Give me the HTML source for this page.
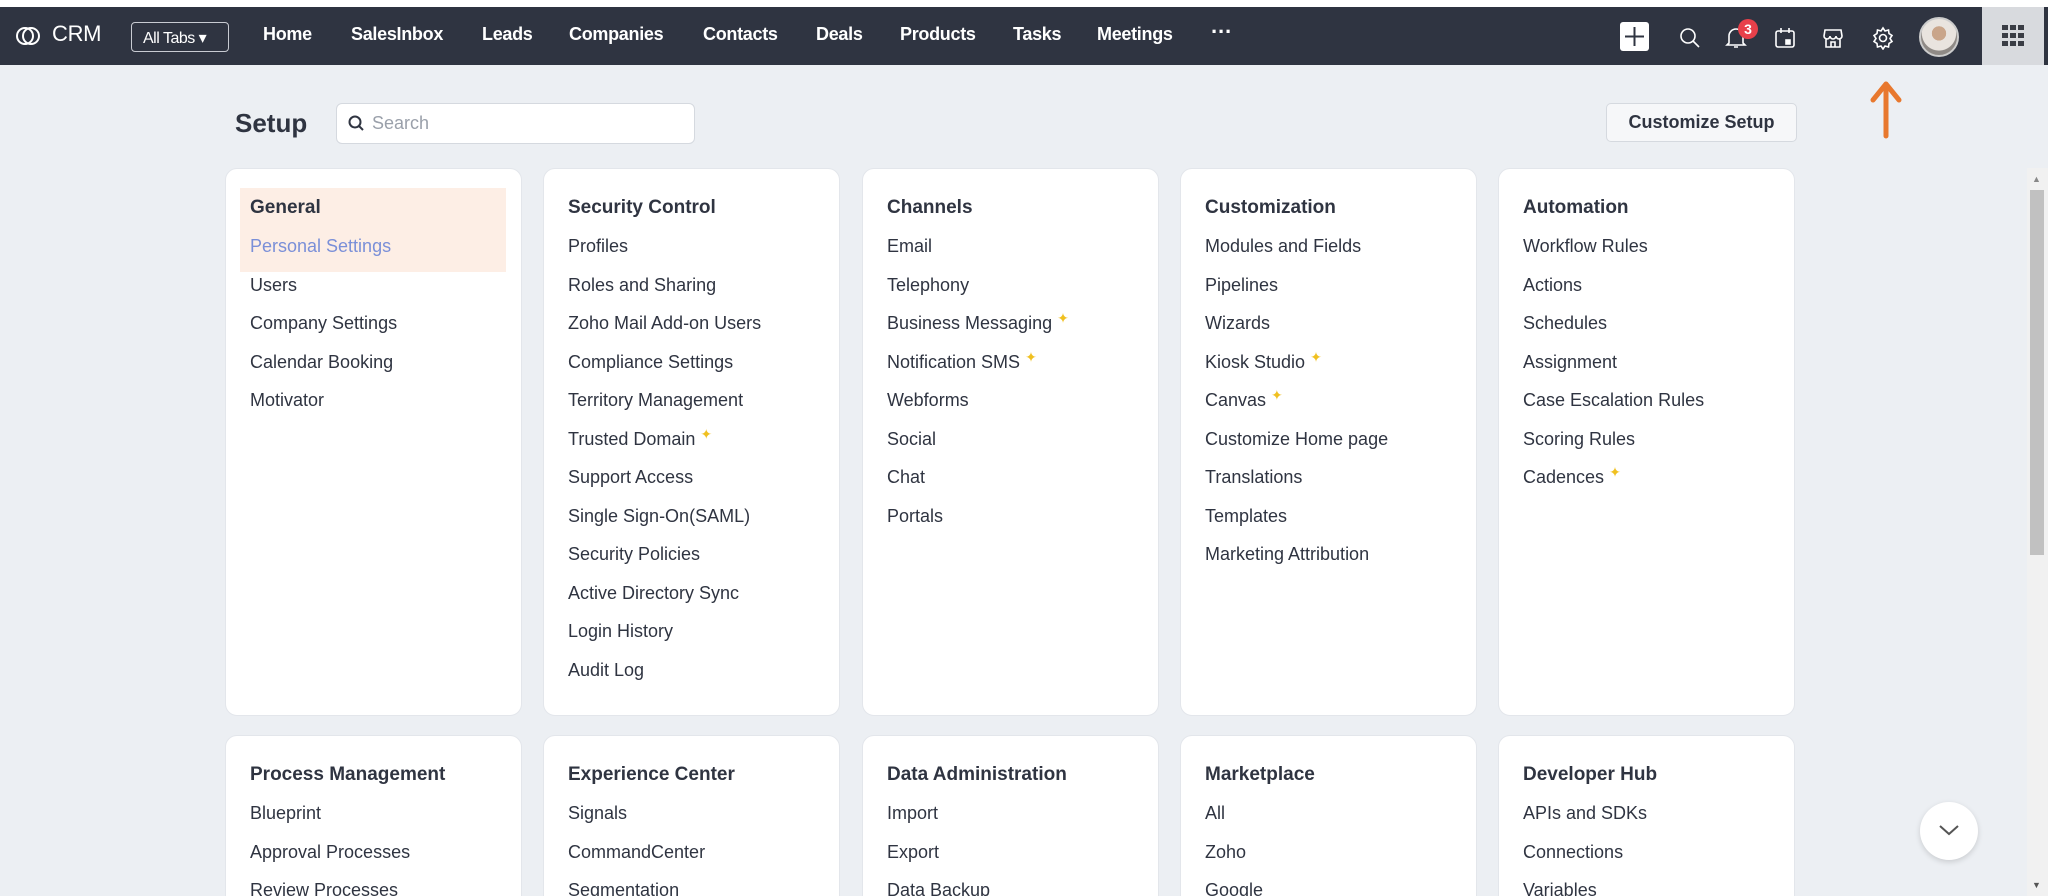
<!DOCTYPE html>
<html style="width:2048px;height:896px;overflow:hidden"><head><meta charset="utf-8"><style>
*{margin:0;padding:0;box-sizing:border-box}
body{width:2048px;height:896px;overflow:hidden;background:#eceff3;font-family:"Liberation Sans",sans-serif;position:relative;color:#2f3441}
.top{position:absolute;left:0;top:0;width:2048px;height:7px;background:#fff}
.nav{position:absolute;left:0;top:7px;width:2048px;height:58px;background:#2f3441}
.nav .t{position:absolute;top:17px;color:#fff;font-size:18px;font-weight:bold;letter-spacing:-0.3px}
.alltabs{position:absolute;left:131px;top:15px;width:98px;height:30px;border:1.5px solid #c8cbd2;border-radius:4px;color:#fff;font-size:16px;padding:5px 0 0 11px;letter-spacing:-0.5px}
.card{position:absolute;width:297px;background:#fff;border-radius:12px;border:1px solid #e3e6eb}
.card div{position:absolute;left:24px;font-size:18px;color:#2f3441;white-space:nowrap}
.card .h{font-weight:bold;font-size:19px}
.sp{color:#f0c020;font-size:14px;position:relative;top:-6px}
.ic{position:absolute;top:0}
</style></head><body>
<div class="top"></div>
<div class="nav">
<svg class="ic" style="left:14px;top:15px" width="28" height="28" viewBox="0 0 28 28" fill="none" stroke="#fff" stroke-width="2"><circle cx="11" cy="14" r="8"/><circle cx="17" cy="14" r="8"/></svg>
<div class="t" style="left:52px;top:14px;font-size:22px;font-weight:normal">CRM</div>
<div class="alltabs">All Tabs ▾</div>
<div class="t" style="left:263px">Home</div>
<div class="t" style="left:351px">SalesInbox</div>
<div class="t" style="left:482px">Leads</div>
<div class="t" style="left:569px">Companies</div>
<div class="t" style="left:703px">Contacts</div>
<div class="t" style="left:816px">Deals</div>
<div class="t" style="left:900px">Products</div>
<div class="t" style="left:1013px">Tasks</div>
<div class="t" style="left:1097px">Meetings</div>
<div class="t" style="left:1211px;top:20px;font-size:22px;line-height:10px">···</div>
<div style="position:absolute;left:1620px;top:15px;width:29px;height:29px;background:#fff;border-radius:3px"></div>
<svg class="ic" style="left:1620px;top:15px" width="29" height="29"><path d="M14.5 5v19M5 14.5h19" stroke="#2f3441" stroke-width="2"/></svg>
<svg class="ic" style="left:1678px;top:19px" width="24" height="24" fill="none" stroke="#fff" stroke-width="1.6"><circle cx="10" cy="10" r="7"/><path d="M15 15l6 6"/></svg>
<svg class="ic" style="left:1724px;top:18px" width="24" height="26" fill="none" stroke="#fff" stroke-width="1.6"><path d="M5 18V11a7 7 0 0 1 14 0v7l2 2H3z M10 22h4"/></svg>
<div style="position:absolute;left:1738px;top:12px;width:20px;height:20px;border-radius:50%;background:#e8404a;color:#fff;font-size:14px;font-weight:bold;text-align:center;line-height:20px">3</div>
<svg class="ic" style="left:1773px;top:19px" width="24" height="24" fill="none" stroke="#fff" stroke-width="1.6"><rect x="3" y="5" width="18" height="16" rx="2"/><path d="M8 2v5M16 2v5"/><rect x="13" y="14" width="4" height="4" fill="#fff"/></svg>
<svg class="ic" style="left:1821px;top:19px" width="24" height="24" fill="none" stroke="#fff" stroke-width="1.6"><path d="M4 4h16l1 6a3 3 0 0 1-6 0 3 3 0 0 1-6 0 3 3 0 0 1-6 0z M5 12v9h14v-9 M10 21v-5h4v5"/></svg>
<svg class="ic" style="left:1871px;top:19px" width="24" height="24" fill="none" stroke="#fff" stroke-width="1.6"><circle cx="12" cy="12" r="3.5"/><path d="M12 2l2 3 3.5-1 .5 3.5 3 2-2 3 2 3-3 2-.5 3.5-3.5-1-2 3-2-3-3.5 1-.5-3.5-3-2 2-3-2-3 3-2 .5-3.5 3.5 1z"/></svg>
<div style="position:absolute;left:1919px;top:10px;width:40px;height:40px;border-radius:50%;background:radial-gradient(circle at 50% 40%,#c9a58a 0 25%,#e9e4df 26% 60%,#8f8a86 62%);border:2px solid #ccc"></div>
<div style="position:absolute;left:1982px;top:0;width:62px;height:58px;background:#d8dade"></div>
<svg class="ic" style="left:2002px;top:18px" width="22" height="22" fill="#3a3d45"><rect x="0" y="0" width="6" height="5"/><rect x="8" y="0" width="6" height="5"/><rect x="16" y="0" width="6" height="5"/><rect x="0" y="8" width="6" height="5"/><rect x="8" y="8" width="6" height="5"/><rect x="16" y="8" width="6" height="5"/><rect x="0" y="16" width="6" height="5"/><rect x="8" y="16" width="6" height="5"/><rect x="16" y="16" width="6" height="5"/></svg>
</div>

<div style="position:absolute;left:235px;top:108px;font-size:26px;font-weight:bold;color:#2f3441">Setup</div>
<div style="position:absolute;left:336px;top:103px;width:359px;height:41px;background:#fff;border:1px solid #d5d9df;border-radius:6px"></div>
<svg class="ic" style="left:347px;top:114px" width="18" height="18" fill="none" stroke="#2f3441" stroke-width="2"><circle cx="8" cy="8" r="5.5"/><path d="M12 12l4 4"/></svg>
<div style="position:absolute;left:372px;top:113px;font-size:18px;color:#9aa0aa">Search</div>
<div style="position:absolute;left:1606px;top:103px;width:191px;height:39px;background:#f6f7f9;border:1px solid #d5d9df;border-radius:5px;font-size:18px;font-weight:bold;text-align:center;line-height:37px;color:#2f3441">Customize Setup</div>
<svg class="ic" style="left:1868px;top:78px" width="36" height="62" fill="none" stroke="#e8782e" stroke-width="5" stroke-linecap="round" stroke-linejoin="round"><path d="M18 58V6M5 22L18 6l13 16"/></svg>

<div class="card" style="left:225px;top:168px;height:548px">
<div style="left:14px;top:19px;width:266px;height:84px;background:#fdeee5"></div>
<div class="h" style="top:28px">General</div>
<div style="top:67px;color:#7a8fd8">Personal Settings</div>
<div style="top:106px">Users</div>
<div style="top:144px">Company Settings</div>
<div style="top:183px">Calendar Booking</div>
<div style="top:221px">Motivator</div>
</div>
<div class="card" style="left:543px;top:168px;height:548px">
<div class="h" style="top:28px">Security Control</div>
<div style="top:67px">Profiles</div>
<div style="top:106px">Roles and Sharing</div>
<div style="top:144px">Zoho Mail Add-on Users</div>
<div style="top:183px">Compliance Settings</div>
<div style="top:221px">Territory Management</div>
<div style="top:260px">Trusted Domain <span class="sp">✦</span></div>
<div style="top:298px">Support Access</div>
<div style="top:337px">Single Sign-On(SAML)</div>
<div style="top:375px">Security Policies</div>
<div style="top:414px">Active Directory Sync</div>
<div style="top:452px">Login History</div>
<div style="top:491px">Audit Log</div>
</div>
<div class="card" style="left:862px;top:168px;height:548px">
<div class="h" style="top:28px">Channels</div>
<div style="top:67px">Email</div>
<div style="top:106px">Telephony</div>
<div style="top:144px">Business Messaging <span class="sp">✦</span></div>
<div style="top:183px">Notification SMS <span class="sp">✦</span></div>
<div style="top:221px">Webforms</div>
<div style="top:260px">Social</div>
<div style="top:298px">Chat</div>
<div style="top:337px">Portals</div>
</div>
<div class="card" style="left:1180px;top:168px;height:548px">
<div class="h" style="top:28px">Customization</div>
<div style="top:67px">Modules and Fields</div>
<div style="top:106px">Pipelines</div>
<div style="top:144px">Wizards</div>
<div style="top:183px">Kiosk Studio <span class="sp">✦</span></div>
<div style="top:221px">Canvas <span class="sp">✦</span></div>
<div style="top:260px">Customize Home page</div>
<div style="top:298px">Translations</div>
<div style="top:337px">Templates</div>
<div style="top:375px">Marketing Attribution</div>
</div>
<div class="card" style="left:1498px;top:168px;height:548px">
<div class="h" style="top:28px">Automation</div>
<div style="top:67px">Workflow Rules</div>
<div style="top:106px">Actions</div>
<div style="top:144px">Schedules</div>
<div style="top:183px">Assignment</div>
<div style="top:221px">Case Escalation Rules</div>
<div style="top:260px">Scoring Rules</div>
<div style="top:298px">Cadences <span class="sp">✦</span></div>
</div>

<div class="card" style="left:225px;top:735px;height:180px">
<div class="h" style="top:28px">Process Management</div>
<div style="top:67px">Blueprint</div>
<div style="top:106px">Approval Processes</div>
<div style="top:144px">Review Processes</div>
</div>
<div class="card" style="left:543px;top:735px;height:180px">
<div class="h" style="top:28px">Experience Center</div>
<div style="top:67px">Signals</div>
<div style="top:106px">CommandCenter</div>
<div style="top:144px">Segmentation</div>
</div>
<div class="card" style="left:862px;top:735px;height:180px">
<div class="h" style="top:28px">Data Administration</div>
<div style="top:67px">Import</div>
<div style="top:106px">Export</div>
<div style="top:144px">Data Backup</div>
</div>
<div class="card" style="left:1180px;top:735px;height:180px">
<div class="h" style="top:28px">Marketplace</div>
<div style="top:67px">All</div>
<div style="top:106px">Zoho</div>
<div style="top:144px">Google</div>
</div>
<div class="card" style="left:1498px;top:735px;height:180px">
<div class="h" style="top:28px">Developer Hub</div>
<div style="top:67px">APIs and SDKs</div>
<div style="top:106px">Connections</div>
<div style="top:144px">Variables</div>
</div>

<div style="position:absolute;left:1920px;top:802px;width:58px;height:58px;border-radius:50%;background:#fff;box-shadow:0 2px 6px rgba(0,0,0,.15)"></div>
<svg class="ic" style="left:1938px;top:823px" width="22" height="14" fill="none" stroke="#555" stroke-width="2"><path d="M2 3l9 8 9-8"/></svg>

<div style="position:absolute;left:2027px;top:168px;width:21px;height:728px;background:#f1f1f1"></div>
<div style="position:absolute;left:2030px;top:190px;width:14px;height:365px;background:#c1c1c1"></div>
<div style="position:absolute;left:2032px;top:174px;font-size:9px;color:#888">▲</div>
<div style="position:absolute;left:2032px;top:880px;font-size:9px;color:#555">▼</div>
</body></html>
